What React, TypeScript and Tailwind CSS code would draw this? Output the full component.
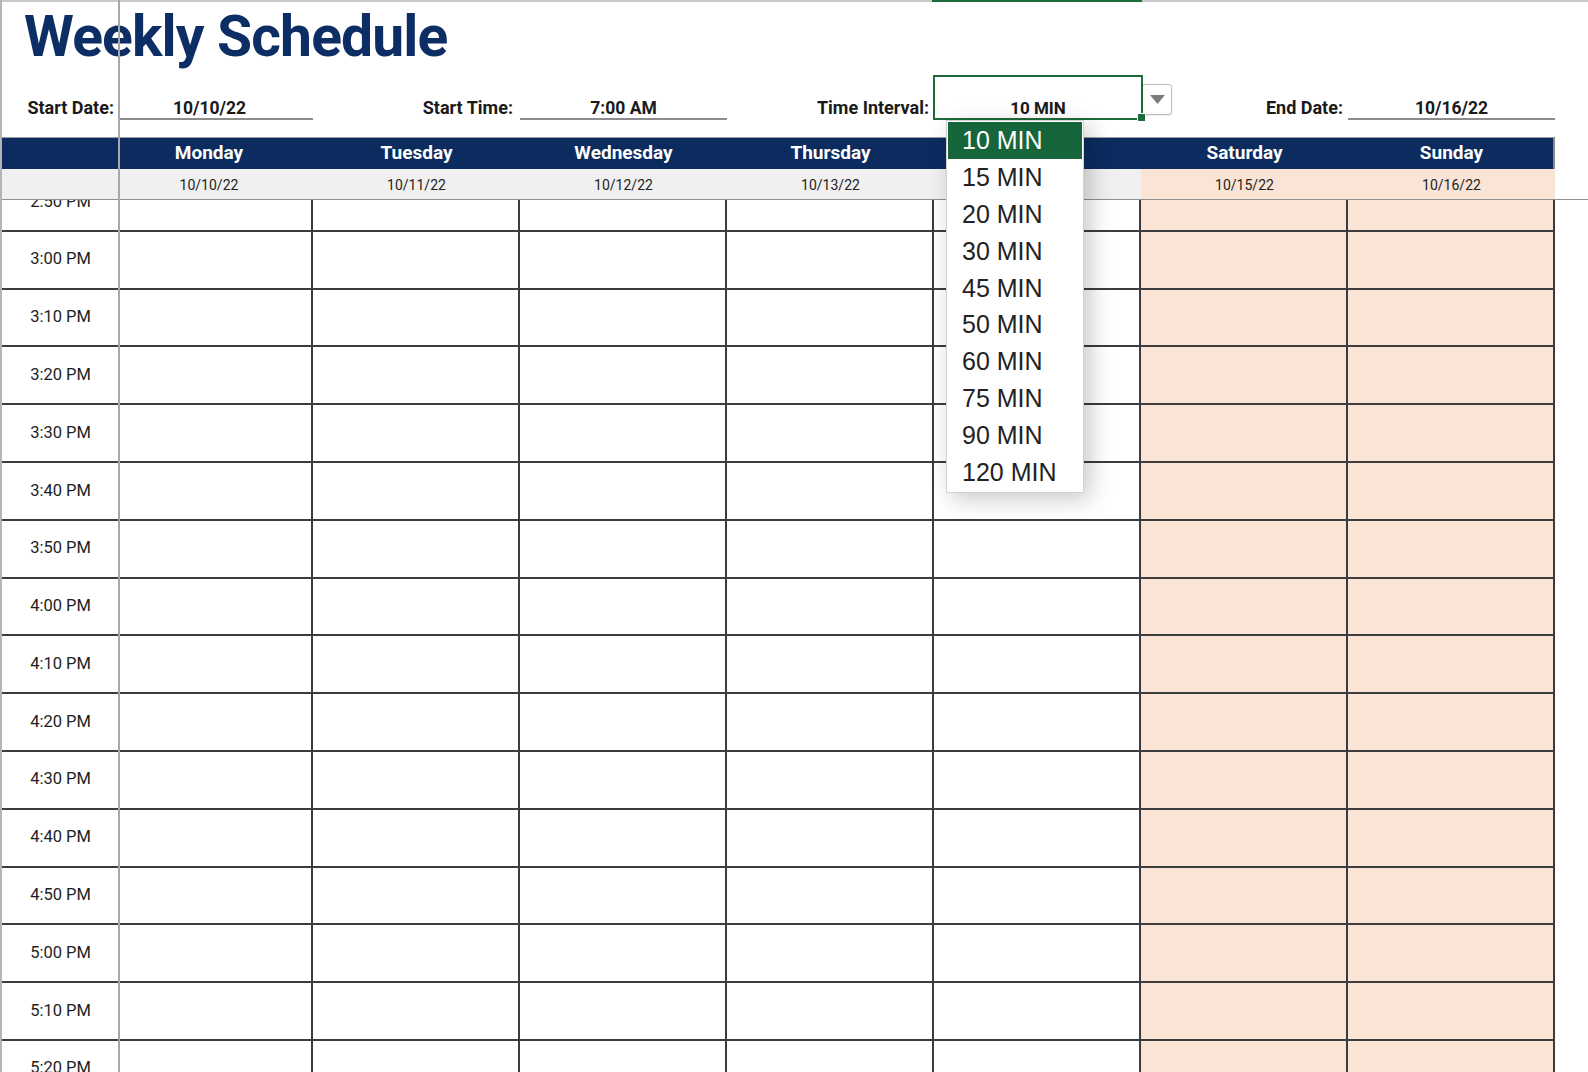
import React from "react";

const DAYS = [
  { name: "Monday", date: "10/10/22", weekend: false },
  { name: "Tuesday", date: "10/11/22", weekend: false },
  { name: "Wednesday", date: "10/12/22", weekend: false },
  { name: "Thursday", date: "10/13/22", weekend: false },
  { name: "Friday", date: "10/14/22", weekend: false },
  { name: "Saturday", date: "10/15/22", weekend: true },
  { name: "Sunday", date: "10/16/22", weekend: true },
];

const TIMES = [
  "2:50 PM",
  "3:00 PM",
  "3:10 PM",
  "3:20 PM",
  "3:30 PM",
  "3:40 PM",
  "3:50 PM",
  "4:00 PM",
  "4:10 PM",
  "4:20 PM",
  "4:30 PM",
  "4:40 PM",
  "4:50 PM",
  "5:00 PM",
  "5:10 PM",
  "5:20 PM",
  "5:30 PM",
];

const INTERVALS = [
  "10 MIN",
  "15 MIN",
  "20 MIN",
  "30 MIN",
  "45 MIN",
  "50 MIN",
  "60 MIN",
  "75 MIN",
  "90 MIN",
  "120 MIN",
];

const GRID = "grid grid-cols-[117px_194px_207px_207px_207px_207px_207px_207px]";

function Label({ text, pr }: { text: string; pr: string }) {
  return (
    <div className={`flex items-end justify-end pb-[2px] ${pr}`}>
      <span className="block text-[18px] font-bold leading-[20px] text-[#1a1a1a]">{text}</span>
    </div>
  );
}

function Value({ text, shift }: { text: string; shift?: string }) {
  return (
    <div className={`flex items-end justify-center border-b-2 border-[#8c8c8c] ${shift ?? ""}`}>
      <span className="block text-[17.5px] font-bold leading-[20px] text-[#1a1a1a]">{text}</span>
    </div>
  );
}

export default function App() {
  return (
    <div className="relative w-[1588px] h-[1072px] overflow-hidden border-l-2 border-[#b4b4b4] bg-white font-['Roboto',sans-serif] text-[#222]">
      {/* top sheet edge */}
      <div className="flex h-[2px]">
        <div className="w-[930px] bg-[#c9c9c9]" />
        <div className="w-[210px] bg-[#1d6b3a]" />
        <div className="flex-1 bg-[#c9c9c9]" />
      </div>

      {/* title */}
      <div className="h-[73px] pl-[22px] pt-[6px]">
        <h1 className="text-[57px] font-bold leading-none tracking-[-0.015em] text-[#0d2e64]">
          Weekly Schedule
        </h1>
      </div>

      {/* parameters row */}
      <div className={`${GRID} h-[45px]`}>
        <Label text="Start Date:" pr="pr-[5px]" />
        <Value text="10/10/22" shift="pr-[14px] ml-[1px]" />
        <Label text="Start Time:" pr="pr-[7px]" />
        <Value text="7:00 AM" />
        <Label text="Time Interval:" pr="pr-[5px]" />
        <div className="relative -ml-[1px] mr-[-2px] flex items-end justify-center border-2 border-[#1d6b3a]">
          <span className="block text-[17px] font-bold leading-[20px] text-[#1a1a1a]">10 MIN</span>
          <span className="absolute -bottom-[4px] -right-[5px] h-[9px] w-[9px] border border-white bg-[#1d6b3a]" />
        </div>
        <div className="flex items-end justify-between">
          <div className="mb-[5px] ml-[1px] flex h-[31px] w-[30px] items-center justify-center rounded-[3px] border border-[#bdbdbd] bg-white shadow-[0_1px_1px_rgba(0,0,0,0.08)]">
            <svg width="15" height="9" viewBox="0 0 15 9">
              <polygon points="0,0 15,0 7.5,9" fill="#7b7b7b" />
            </svg>
          </div>
          <div className="pb-[2px] pr-[5px] leading-[20px]">
            <span className="block text-[18px] font-bold leading-[20px] text-[#1a1a1a]">End Date:</span>
          </div>
        </div>
        <Value text="10/16/22" />
      </div>

      {/* spacer */}
      <div className="h-[17px]" />

      {/* day header */}
      <div className={`${GRID} w-[1553px] h-[32px] border-t border-[#9a9a9a] border-r-2 border-r-[#8c8c8c] bg-[#0c2c60]`}>
        <div />
        {DAYS.map((d, i) => (
          <div
            key={d.name}
            className={`flex items-center justify-center text-[19px] font-bold text-white ${i === 0 ? "pr-[14px]" : ""}`}
          >
            {d.name}
          </div>
        ))}
      </div>

      {/* date row */}
      <div className="border-b border-[#8f8f8f]">
        <div className={`${GRID} w-[1553px] h-[30px] border-r-2 border-[#8c8c8c] bg-[#f0f0f0]`}>
          <div />
          {DAYS.map((d, i) => (
            <div
              key={d.date}
              className={`flex items-center justify-center pt-[2px] text-[14px] text-[#222] ${
                d.weekend ? "bg-[#f9e4d6]" : ""
              } ${i === 0 ? "pr-[14px]" : ""}`}
            >
              {d.date}
            </div>
          ))}
        </div>
      </div>

      {/* body */}
      <div className="h-[875px] overflow-hidden">
        <div className="-mt-[26px]">
          {TIMES.map((t) => (
            <div key={t} className={`${GRID} w-[1553px] h-[57.8px]`}>
              <div className="flex items-center justify-center border-b-2 border-[#3c3c3c] text-[16.5px] text-[#1e1e1e]">
                {t}
              </div>
              {DAYS.map((d) => (
                <div
                  key={d.name}
                  className={`border-b-2 border-r-2 border-[#3c3c3c] ${d.weekend ? "bg-[#f9e4d6]" : "bg-white"}`}
                />
              ))}
            </div>
          ))}
        </div>
      </div>

      {/* frozen pane divider */}
      <div className="absolute left-[116px] top-0 h-full w-[2px] bg-[#a8a8a8]" />
      {/* active row marker */}
      <div className="absolute -left-[2px] top-[75px] h-[45px] w-[2px] bg-[#1d6b3a]" />

      {/* dropdown list */}
      <div className="absolute left-[944px] top-[120px] w-[138px] border border-[#d2d2d2] bg-white pb-[1px] pt-[1px] shadow-[6px_6px_22px_rgba(0,0,0,0.22)] font-['Liberation_Sans',Arial,sans-serif]">
        {INTERVALS.map((v, i) => (
          <div
            key={v}
            className={`mx-[1px] flex h-[36.9px] items-center pl-[14px] text-[25px] leading-none ${
              i === 0 ? "bg-[#17653a] text-white" : "text-[#222]"
            }`}
          >
            {v}
          </div>
        ))}
      </div>
    </div>
  );
}
